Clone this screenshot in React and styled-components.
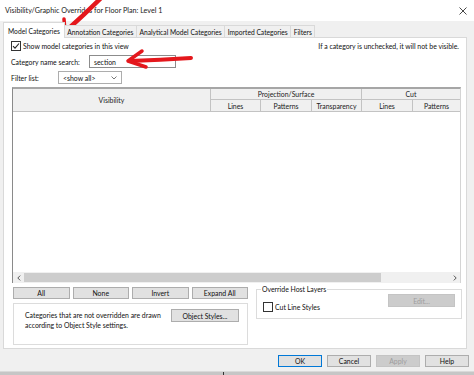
import React from "react";
import styled, { createGlobalStyle } from "styled-components";

const GlobalStyle = createGlobalStyle`
  html, body { margin: 0; padding: 0; }
  body {
    font-family: "Lato", "Noto Sans", sans-serif;
    font-size: 6.9px;
    color: #111;
  }
  * { box-sizing: border-box; }
`;

const Window = styled.div`
  position: relative;
  width: 474px;
  height: 375px;
  background: #f0f0f0;
  display: flex;
  flex-direction: column;
  overflow: hidden;
  white-space: nowrap;
`;

const TitleBar = styled.div`
  height: 21px;
  background: #fff;
  display: flex;
  align-items: center;
  justify-content: space-between;
  padding: 0 7px 0 5px;
  font-size: 7.2px;
  color: #1a1a1a;
`;

const Body = styled.div`
  padding: 1px 7px 0 3px;
  display: flex;
  flex-direction: column;
`;

const TabStrip = styled.div`
  display: flex;
  align-items: flex-end;
  height: 16px;
  position: relative;
  z-index: 1;
`;

const Tab = styled.div`
  height: ${(p) => (p.$active ? 16 : 13)}px;
  padding: 0 ${(p) => (p.$active ? 4 : 2.5)}px;
  display: flex;
  align-items: center;
  border: 1px solid #d9d9d9;
  border-bottom: ${(p) => (p.$active ? "none" : "1px solid #d9d9d9")};
  margin-left: -1px;
  background: ${(p) => (p.$active ? "#fff" : "#f0f0f0")};
  font-size: 6.7px;
  &:first-child { margin-left: 0; }
`;

const Panel = styled.div`
  height: 312px;
  margin-top: -1px;
  background: #fff;
  border: 1px solid #d9d9d9;
  padding: 0 5px 0 7px;
  display: flex;
  flex-direction: column;
`;

const TopRow = styled.div`
  margin-top: 2px;
  height: 11px;
  display: flex;
  align-items: center;
  justify-content: space-between;
`;

const CheckLabel = styled.label`
  display: flex;
  align-items: center;
  gap: 2px;
`;

const Box = styled.span`
  width: 10px;
  height: 10px;
  border: 1px solid #333;
  background: #fff;
  display: inline-flex;
  align-items: center;
  justify-content: center;
`;

const Hint = styled.span`
  padding-right: 2px;
`;

const FieldRow = styled.div`
  margin-top: ${(p) => p.$gap}px;
  height: 13px;
  display: flex;
  align-items: center;
`;

const FieldLabel = styled.span`
  width: ${(p) => p.$w}px;
`;

const TextInput = styled.div`
  width: 87px;
  height: 13px;
  border: 1px solid #8c8c8c;
  padding: 0 4px;
  display: flex;
  align-items: center;
`;

const Select = styled.div`
  width: 64px;
  height: 13px;
  border: 1px solid #adadad;
  padding: 0 4px;
  display: flex;
  align-items: center;
  justify-content: space-between;
`;

const Table = styled.div`
  margin: 3px 0 0 1px;
  height: 196px;
  border-top: 2px solid #a6a6a6;
  border-left: 1px solid #8a8a8a;
  border-right: 1px solid #d4d4d4;
  display: flex;
  flex-direction: column;
`;

const Header = styled.div`
  display: grid;
  grid-template-columns: 198px 50px 51px 50px 51px 1fr;
  grid-template-rows: 11px 12px;
  background: #f0f0f0;
`;

const HeadCell = styled.div`
  grid-column: ${(p) => p.$col};
  grid-row: ${(p) => p.$row};
  display: flex;
  align-items: center;
  justify-content: center;
  border-right: ${(p) => (p.$last ? "none" : "1px solid #c3c3c3")};
  border-bottom: 1px solid #c3c3c3;
  color: #222;
`;

const TableBody = styled.div`
  flex: 1;
  background: #fff;
`;

const ScrollBar = styled.div`
  height: 11px;
  display: flex;
  align-items: center;
  background: #f0f0f0;
`;

const ScrollArrow = styled.span`
  width: 11px;
  display: flex;
  align-items: center;
  justify-content: center;
`;

const Thumb = styled.div`
  height: 9px;
  width: 357px;
  background: #cdcdcd;
`;

const ScrollGap = styled.div`
  flex: 1;
`;

const Lower = styled.div`
  margin: 4px 0 0 2px;
  display: grid;
  grid-template-columns: 235px 206px;
  gap: 8px;
`;

const LeftCol = styled.div`
  display: flex;
  flex-direction: column;
`;

const ButtonRow = styled.div`
  display: grid;
  grid-template-columns: repeat(4, 1fr);
  gap: 3px;
`;

const Button = styled.div`
  height: ${(p) => p.$h || 12}px;
  width: ${(p) => (p.$w ? `${p.$w}px` : "auto")};
  display: flex;
  align-items: center;
  justify-content: center;
  background: ${(p) => (p.$disabled ? "#cccccc" : "#e1e1e1")};
  border: 1px solid
    ${(p) => (p.$primary ? "#0078d7" : p.$disabled ? "#c4c4c4" : "#adadad")};
  color: ${(p) => (p.$disabled ? "#9d9d9d" : "#111")};
`;

const InfoBox = styled.div`
  margin-top: 4px;
  height: 42px;
  border: 1px solid #dcdcdc;
  display: flex;
  align-items: flex-start;
  justify-content: space-between;
  padding: 5px 8px 0 11px;
  line-height: 10px;
`;

const InfoText = styled.span`
  padding-top: 1px;
`;

const GroupBox = styled.fieldset`
  margin: -2px 0 0 0;
  padding: 0 6px 0 6px;
  height: 34px;
  border: 1px solid #dcdcdc;
  display: flex;
  align-items: flex-start;
  justify-content: space-between;
  legend {
    padding: 0 1px;
    margin-left: -2px;
    line-height: 9px;
  }
`;

const GroupInner = styled.div`
  width: 100%;
  display: flex;
  justify-content: space-between;
  align-items: flex-start;
`;

const CutCheck = styled(CheckLabel)`
  margin-top: 8px;
`;

const Footer = styled.div`
  height: 22px;
  display: flex;
  justify-content: flex-end;
  align-items: flex-start;
  gap: 5px;
  padding: 6px 5px 0 0;
`;

const BottomStrip = styled.div`
  margin-top: auto;
  height: 4px;
  background: #c6c6c6;
  border-top: 1px solid #dadada;
  display: flex;
  padding-left: 223px;
`;

const Tick = styled.span`
  width: 1px;
  height: 4px;
  background: #333;
`;

const Overlay = styled.svg`
  position: absolute;
  left: 0;
  top: 0;
  pointer-events: none;
`;

const Check = () => (
  <svg width="8" height="8" viewBox="0 0 8 8">
    <path d="M1 4.2 L3 6.2 L7 1.5" fill="none" stroke="#222" strokeWidth="1.1" />
  </svg>
);

const Chevron = ({ dir }) => (
  <svg width="4" height="6" viewBox="0 0 4 6">
    <path
      d={dir === "left" ? "M3.2 0.6 L0.8 3 L3.2 5.4" : "M0.8 0.6 L3.2 3 L0.8 5.4"}
      fill="none"
      stroke="#444"
      strokeWidth="0.9"
    />
  </svg>
);

const tabs = [
  "Model Categories",
  "Annotation Categories",
  "Analytical Model Categories",
  "Imported Categories",
  "Filters",
];

export default function App() {
  return (
    <Window>
      <GlobalStyle />
      <TitleBar>
        <span>Visibility/Graphic Overrides for Floor Plan: Level 1</span>
        <svg width="8" height="8" viewBox="0 0 8 8">
          <path d="M0.5 0.5 L7.5 7.5 M7.5 0.5 L0.5 7.5" stroke="#333" strokeWidth="0.9" />
        </svg>
      </TitleBar>
      <Body>
        <TabStrip>
          {tabs.map((t, i) => (
            <Tab key={t} $active={i === 0}>{t}</Tab>
          ))}
        </TabStrip>
        <Panel>
          <TopRow>
            <CheckLabel>
              <Box><Check /></Box>
              Show model categories in this view
            </CheckLabel>
            <Hint>If a category is unchecked, it will not be visible.</Hint>
          </TopRow>
          <FieldRow $gap={4}>
            <FieldLabel $w={78}>Category name search:</FieldLabel>
            <TextInput>section</TextInput>
          </FieldRow>
          <FieldRow $gap={3}>
            <FieldLabel $w={47}>Filter list:</FieldLabel>
            <Select>
              <span>&lt;show all&gt;</span>
              <svg width="6" height="4" viewBox="0 0 6 4">
                <path d="M0.5 0.5 L3 3 L5.5 0.5" fill="none" stroke="#555" strokeWidth="0.8" />
              </svg>
            </Select>
          </FieldRow>
          <Table>
            <Header>
              <HeadCell $col="1" $row="1 / span 2">Visibility</HeadCell>
              <HeadCell $col="2 / span 3" $row="1">Projection/Surface</HeadCell>
              <HeadCell $col="5 / span 2" $row="1" $last>Cut</HeadCell>
              <HeadCell $col="2" $row="2">Lines</HeadCell>
              <HeadCell $col="3" $row="2">Patterns</HeadCell>
              <HeadCell $col="4" $row="2">Transparency</HeadCell>
              <HeadCell $col="5" $row="2">Lines</HeadCell>
              <HeadCell $col="6" $row="2" $last>Patterns</HeadCell>
            </Header>
            <TableBody />
            <ScrollBar>
              <ScrollArrow><Chevron dir="left" /></ScrollArrow>
              <Thumb />
              <ScrollGap />
              <ScrollArrow><Chevron dir="right" /></ScrollArrow>
            </ScrollBar>
          </Table>
          <Lower>
            <LeftCol>
              <ButtonRow>
                <Button>All</Button>
                <Button>None</Button>
                <Button>Invert</Button>
                <Button>Expand All</Button>
              </ButtonRow>
              <InfoBox>
                <InfoText>
                  Categories that are not overridden are drawn
                  <br />
                  according to Object Style settings.
                </InfoText>
                <Button $w={68} $h={13}>Object Styles...</Button>
              </InfoBox>
            </LeftCol>
            <GroupBox>
              <legend>Override Host Layers</legend>
              <GroupInner>
                <CutCheck>
                  <Box />
                  Cut Line Styles
                </CutCheck>
                <Button $w={67} $h={13} $disabled>Edit...</Button>
              </GroupInner>
            </GroupBox>
          </Lower>
        </Panel>
      </Body>
      <Footer>
        <Button $w={44} $primary>OK</Button>
        <Button $w={44}>Cancel</Button>
        <Button $w={44} $disabled>Apply</Button>
        <Button $w={44}>Help</Button>
      </Footer>
      <BottomStrip>
        <Tick />
      </BottomStrip>
      <Overlay width="474" height="375" viewBox="0 0 474 375">
        <g fill="none" stroke="#e4171c" strokeLinecap="round" strokeLinejoin="round">
          <path d="M101 -2 Q85 14 67 30" strokeWidth="4.5" />
          <path d="M64 19 L65 32 L80 31" strokeWidth="3.5" />
          <path d="M130 61 Q160 60 191 58" strokeWidth="4" />
          <path d="M142 51 L128 61 L146 67" strokeWidth="3.5" />
        </g>
      </Overlay>
    </Window>
  );
}
